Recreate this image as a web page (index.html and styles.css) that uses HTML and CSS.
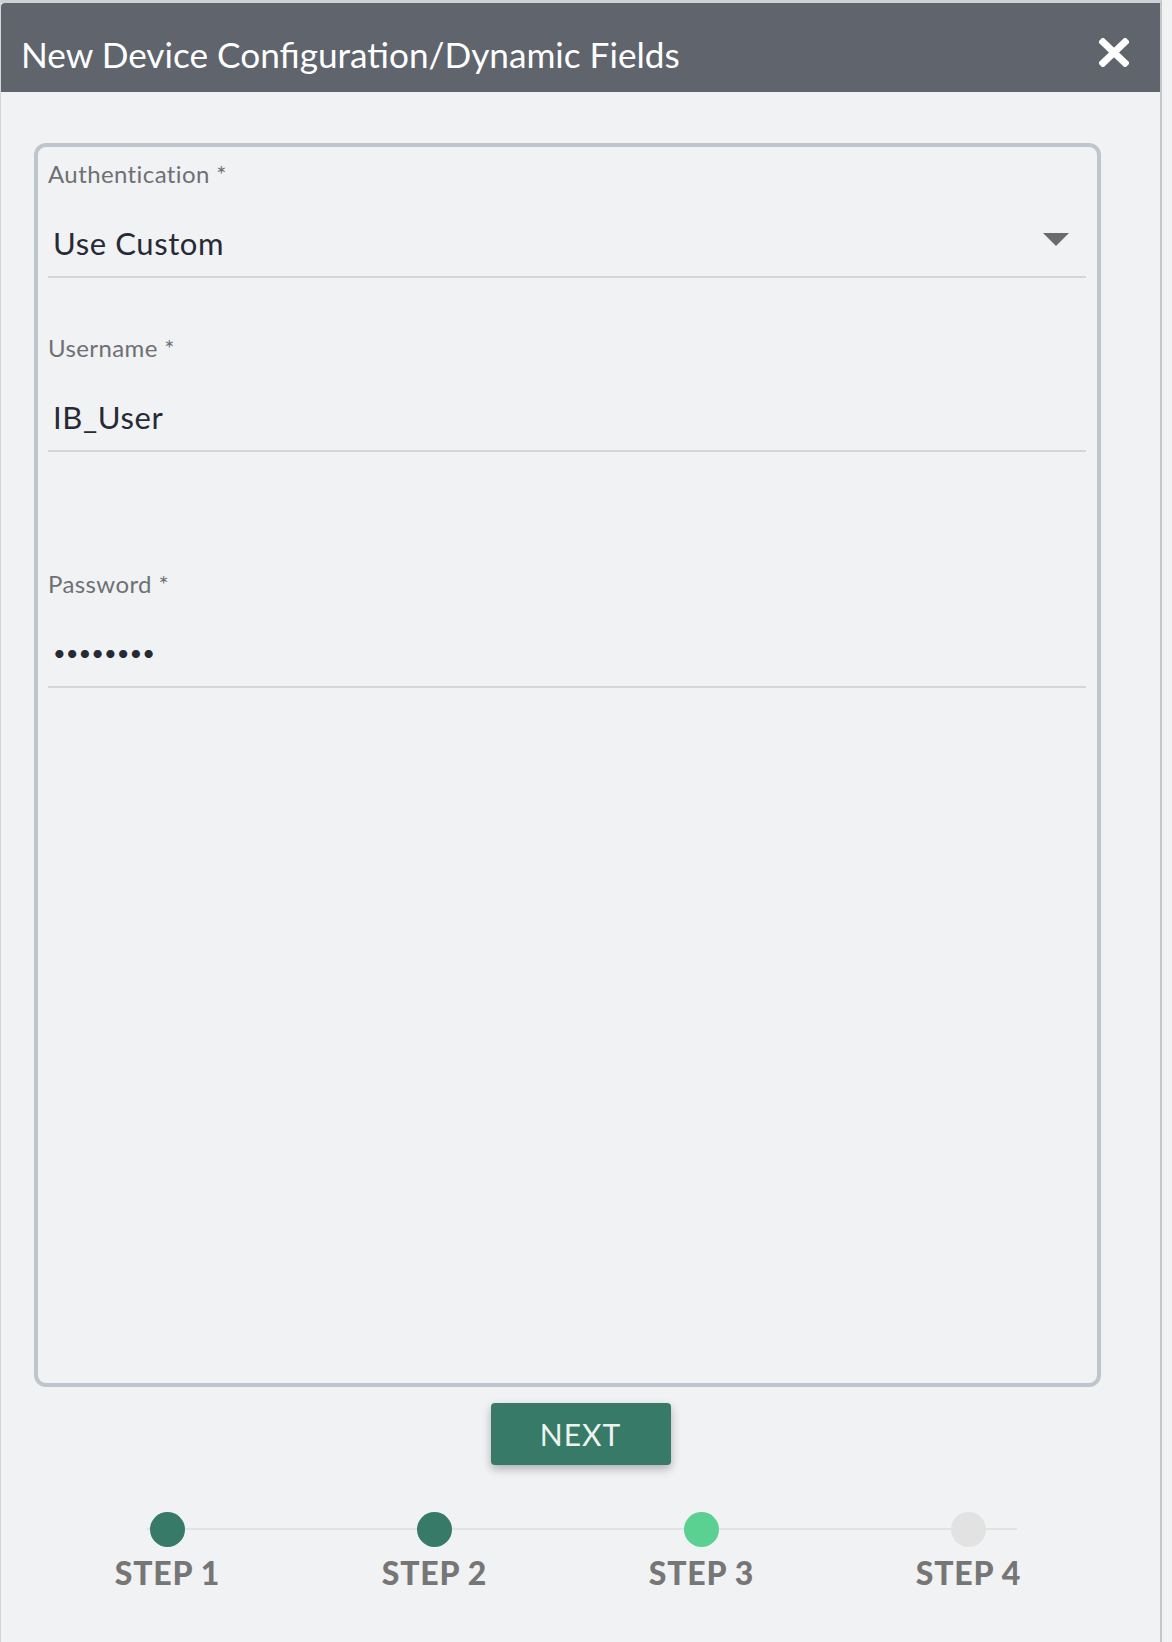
FILE: index.html
```html
<!DOCTYPE html>
<html lang="en">
<head>
<meta charset="utf-8">
<title>New Device Configuration/Dynamic Fields</title>
<link rel="stylesheet" href="styles.css">
</head>
<body>
<div class="modal">
  <div class="modal-header">
    <h1 class="modal-title">New Device Configuration/Dynamic Fields</h1>
    <button class="close-btn" aria-label="Close">
      <svg width="30" height="29" viewBox="0 0 30 29"><path d="M4 4 L26 25 M26 4 L4 25" stroke="#ffffff" stroke-width="7" stroke-linecap="square" fill="none"/></svg>
    </button>
  </div>
  <div class="modal-body">
    <div class="form-card">
      <div class="field field-auth">
        <div class="field-label">Authentication *</div>
        <div class="field-input">
          <span class="field-value">Use Custom</span>
          <svg class="caret" width="26" height="14" viewBox="0 0 26 14"><path d="M0 0 H26 L13 13 Z" fill="#6b6b6b"/></svg>
        </div>
      </div>
      <div class="field field-user">
        <div class="field-label">Username *</div>
        <div class="field-input"><span class="field-value">IB_User</span></div>
      </div>
      <div class="field field-pass">
        <div class="field-label">Password *</div>
        <div class="field-input"><span class="field-value dots">••••••••</span></div>
      </div>
    </div>
    <div class="actions">
      <button class="next-btn">NEXT</button>
    </div>
    <div class="stepper">
      <div class="stepper-line"></div>
      <div class="step">
        <span class="step-dot done"></span>
        <span class="step-label">STEP 1</span>
      </div>
      <div class="step">
        <span class="step-dot done"></span>
        <span class="step-label">STEP 2</span>
      </div>
      <div class="step">
        <span class="step-dot active"></span>
        <span class="step-label">STEP 3</span>
      </div>
      <div class="step">
        <span class="step-dot todo"></span>
        <span class="step-label">STEP 4</span>
      </div>
    </div>
  </div>
</div>
</body>
</html>
```
FILE: styles.css
```css
* { box-sizing: border-box; }
html, body { margin: 0; padding: 0; }
body {
  background: #f1f2f4;
  font-family: "Lato", "Open Sans", sans-serif;
}
.modal {
  width: 1162px;
  height: 1642px;
  background: #f1f2f4;
  border-top: 3px solid #cfd2d5;
  border-left: 1px solid #d3d5d8;
  border-right: 2px solid #c4c7ca;
}
.modal-header {
  height: 89px;
  background: #5f646d;
  border-top-left-radius: 4px;
  display: flex;
  align-items: center;
  justify-content: space-between;
  padding: 10px 31px 0 20px;
}
.modal-title {
  margin: 0;
  margin-top: 2px;
  color: #ffffff;
  font-size: 35.2px;
  font-weight: 400;
  line-height: 40px;
}
.close-btn {
  border: 0;
  background: transparent;
  padding: 0;
  width: 30px;
  height: 29px;
  display: flex;
}
.modal-body {
  padding: 51px 0 0 33px;
}
.form-card {
  width: 1067px;
  height: 1244px;
  border: 4px solid #bec5cc;
  border-radius: 12px;
  padding: 14px 11px 0 10px;
}
.field {
  border-bottom: 2px solid #d4d6d9;
  padding-bottom: 15px;
}
.field-user { margin-top: 57px; }
.field-pass { margin-top: 119px; }
.field-label {
  font-size: 24px;
  line-height: 26px;
  letter-spacing: 0.4px;
  color: #6e7074;
}
.field-input {
  margin-top: 38px;
  display: flex;
  align-items: center;
  justify-content: space-between;
  padding: 0 17px 0 5px;
  height: 36px;
}
.field-value {
  font-size: 31px;
  line-height: 36px;
  letter-spacing: 0.6px;
  color: #262a36;
}
.dots {
  font-size: 22px;
  letter-spacing: 0;
}
.caret { margin-top: -6px; }
.actions {
  display: flex;
  justify-content: center;
  padding-right: 33px;
  margin-top: 16px;
}
.next-btn {
  width: 180px;
  height: 62px;
  border: 0;
  border-radius: 4px;
  background: #367a67;
  color: #eef3ef;
  font-family: "Lato", "Open Sans", sans-serif;
  font-size: 30px;
  letter-spacing: 1px;
  box-shadow: 0 4px 10px rgba(0, 0, 0, 0.28);
}
.stepper {
  position: relative;
  width: 1068px;
  display: flex;
  margin-top: 47px;
}
.stepper-line {
  position: absolute;
  left: 113px;
  top: 16px;
  width: 870px;
  height: 2px;
  background: #e2e3e5;
}
.step {
  position: relative;
  flex: 1;
  display: flex;
  flex-direction: column;
  align-items: center;
}
.step-dot {
  width: 35px;
  height: 35px;
  border-radius: 50%;
}
.step-dot.done { background: #367a67; }
.step-dot.active { background: #5ad091; }
.step-dot.todo { background: #e2e2e2; }
.step-label {
  margin-top: 8px;
  font-size: 32px;
  line-height: 36px;
  letter-spacing: 0.8px;
  font-weight: 900;
  color: #767676;
}
```
